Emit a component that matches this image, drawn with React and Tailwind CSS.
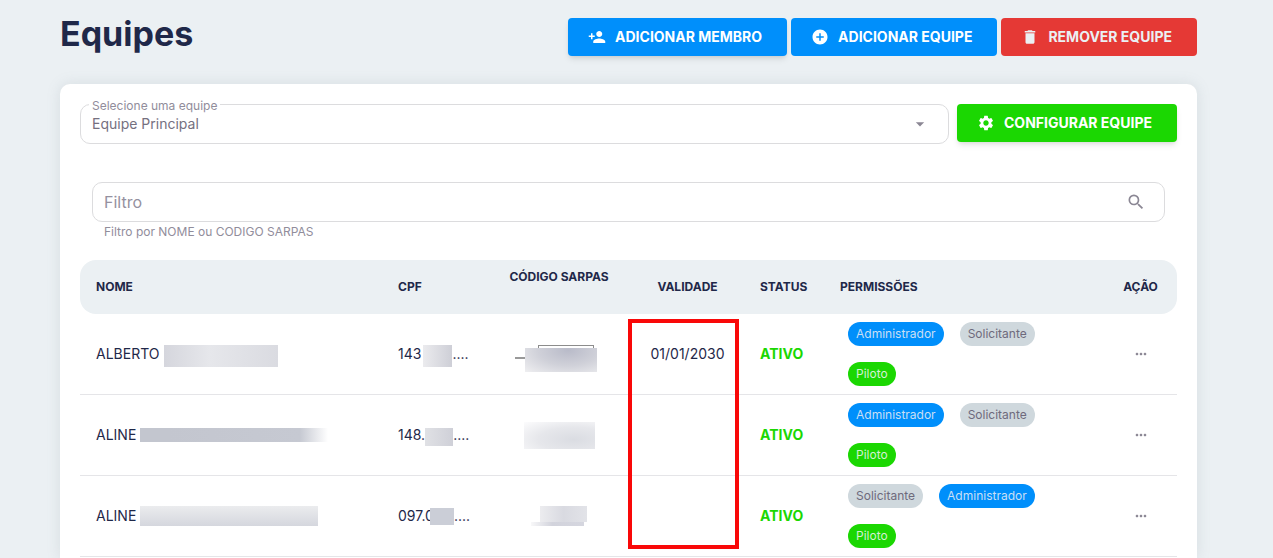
import React, {useState} from 'react'
import { MdPersonAdd, MdAddCircle, MdDelete, MdSettings, MdSearch, MdArrowDropDown, MdMoreHoriz } from 'react-icons/md'

const members = [
  {
    id: 1, name: 'ALBERTO', nameMask: 'ml-1 mt-1 w-[114px] h-[22px] bg-linear-to-r from-[#d5d6dd] via-[#e6e7eb] via-40% to-[#dadbe1]',
    cpf: '143', cpfMask: 'ml-[2px] mt-1 w-[29px] h-[22px] bg-linear-to-r from-[#ebebee] to-[#cecfd7]',
    code: 'outlined', expires: '01/01/2030', roles: ['Administrador', 'Solicitante', 'Piloto'],
  },
  {
    id: 2, name: 'ALINE', nameMask: 'ml-1 w-[188px] h-[14px] bg-linear-to-r from-[#c3c6cf] from-15% via-[#c6c9d2] via-85% to-white',
    cpf: '148.', cpfMask: 'mt-1 w-[28px] h-[18px] bg-linear-to-r from-[#e0e1e5] to-[#cfd0d8]',
    code: 'faded', expires: '', roles: ['Administrador', 'Solicitante', 'Piloto'],
  },
  {
    id: 3, name: 'ALINE', nameMask: 'ml-1 w-[178px] h-[20px] bg-linear-to-t from-[#d5d7de] to-[#ebecee]',
    cpf: '097.0', cpfMask: '-ml-1 w-[24px] h-[17px] bg-[#cbced7]',
    code: 'stacked', expires: '', roles: ['Solicitante', 'Administrador', 'Piloto'],
  },
]

const roleColors = {
  Administrador: 'bg-[#008ffb] text-[#c9dff5]',
  Solicitante: 'bg-[#cfd8dd] text-[#6e6a7c]',
  Piloto: 'bg-[#1bd702] text-[#d3f0d3]',
}

function ActionButton({icon: Icon, color, children}){
  return (
    <button type="button" className={`flex h-[38px] shrink-0 items-center gap-[9px] rounded pl-5 pr-[25px] text-sm font-bold uppercase whitespace-nowrap ${color}`}>
      <Icon size={18} aria-hidden="true" />
      {children}
    </button>
  )
}

function HiddenCode({kind}){
  if(kind==='outlined') return (
    <div className="mx-auto mt-2 flex w-[88px] items-center">
      <span className="h-[2px] w-[10px] bg-[#999]" />
      <div>
        <div className="ml-[13px] h-[3px] w-[56px] border-x border-t border-[#8c8c8c]" />
        <div className="h-6 w-[72px] bg-radial-[at_60%_10%] from-[#b9bbc9] via-[#d0d1d9] via-50% to-[#efeff1]" />
      </div>
    </div>
  )
  if(kind==='faded') return (
    <div className="mx-auto h-[27px] w-[71px] bg-radial-[at_70%_65%] from-[#dadce2] via-[#e6e7eb] via-50% to-[#fcfcfd]" />
  )
  return (
    <div className="mx-auto w-[56px] pl-[9px]">
      <div className="h-4 bg-linear-to-r from-[#ececef] via-[#d9dae1] to-[#e2e3e8]" />
      <div className="-ml-[9px] h-1 w-[53px] bg-linear-to-r from-[#f8f8f9] via-[#d2d3dc] via-40% to-[#d5d6df]" />
    </div>
  )
}

export default function App(){
  const [team, setTeam] = useState('Equipe Principal')
  const [filter, setFilter] = useState('')
  const rows = members.filter(m=>m.name.includes(filter.toUpperCase()))

  return (
    <div className="flex min-h-screen flex-col bg-[#ebf0f3] pl-[60px] pr-[76px] pt-[18px] font-['Inter',sans-serif] text-[#1f2849]">
      <header className="mb-7 flex items-start justify-between">
        <h1 className="text-[34px] leading-8 font-bold">Equipes</h1>
        <div className="flex gap-1">
          <ActionButton icon={MdPersonAdd} color="bg-[#008ffb] text-white shadow-md">Adicionar membro</ActionButton>
          <ActionButton icon={MdAddCircle} color="bg-[#008ffb] text-white">Adicionar equipe</ActionButton>
          <ActionButton icon={MdDelete} color="bg-[#e53935] text-[#ebf0f3]">Remover equipe</ActionButton>
        </div>
      </header>

      <main className="flex-1 rounded-t-[10px] bg-white px-5 pt-5 shadow-[0_0_14px_rgba(120,140,150,0.18)]">
        <div className="flex items-start gap-2">
          <div className="relative flex-1">
            <label htmlFor="team" className="absolute -top-[5px] left-[9px] bg-white px-[3px] text-xs leading-[14px] text-[#918d9b]">Selecione uma equipe</label>
            <select id="team" value={team} onChange={e=>setTeam(e.target.value)} className="h-10 w-full appearance-none rounded-[10px] border border-[#dcdcde] bg-white px-[11px] text-sm text-[#75707f]">
              <option>Equipe Principal</option>
            </select>
            <MdArrowDropDown size={20} className="pointer-events-none absolute top-[10px] right-[19px] text-[#8b8794]" aria-hidden="true" />
          </div>
          <ActionButton icon={MdSettings} color="bg-[#1bd702] text-white shadow-md">Configurar equipe</ActionButton>
        </div>

        <div className="mx-3 mt-[38px]">
          <div className="flex h-10 items-center rounded-[10px] border border-[#dcdcde] pr-[18px] pl-[11px]">
            <input value={filter} onChange={e=>setFilter(e.target.value)} placeholder="Filtro" aria-label="Filtro" aria-describedby="filter-help" className="min-w-0 flex-1 text-base outline-none placeholder:text-[#9591a0]" />
            <MdSearch size={20} className="text-[#8b8794]" aria-hidden="true" />
          </div>
          <p id="filter-help" className="mt-[2px] ml-3 text-xs text-[#918d9b]">Filtro por NOME ou CODIGO SARPAS</p>
        </div>

        <div className="relative mt-5">
          <table className="w-full table-fixed border-separate border-spacing-0 text-sm">
            <thead>
              <tr className="h-[54px] text-left text-xs [&>th]:bg-[#ebf0f3] [&>th]:font-bold">
                <th className="rounded-l-2xl px-4">NOME</th>
                <th className="w-[105px] px-4">CPF</th>
                <th className="w-[144px] pt-[9px] text-center align-top">CÓDIGO SARPAS</th>
                <th className="w-[113px] text-center">VALIDADE</th>
                <th className="w-[80px] pl-4">STATUS</th>
                <th className="w-[280px] px-4">PERMISSÕES</th>
                <th className="w-[73px] rounded-r-2xl text-center">AÇÃO</th>
              </tr>
            </thead>
            <tbody>
              {rows.map(m=>(
                <tr key={m.id} className="[&>td]:border-b [&>td]:border-[#e5e5e8]">
                  <td className="px-4">
                    <div className="flex items-center">{m.name}<span className={m.nameMask} /></div>
                  </td>
                  <td className="pl-4">
                    <div className="flex items-center">{m.cpf}<span className={`relative shrink-0 ${m.cpfMask}`} />....</div>
                  </td>
                  <td><HiddenCode kind={m.code} /></td>
                  <td className="text-center">{m.expires}</td>
                  <td className="pl-4 font-bold text-[#1bd702]">ATIVO</td>
                  <td className="px-4">
                    <ul className="flex flex-wrap">
                      {m.roles.map(r=>(
                        <li key={r} className={`m-2 h-6 rounded-full px-2 text-xs leading-6 ${roleColors[r]}`}>{r}</li>
                      ))}
                    </ul>
                  </td>
                  <td>
                    <button type="button" aria-label="Ações" className="mx-auto block text-[#8b8794]"><MdMoreHoriz size={16} /></button>
                  </td>
                </tr>
              ))}
            </tbody>
          </table>
          <div className="pointer-events-none absolute top-[59px] right-[438px] h-[230px] w-[111px] border-4 border-[#f90808]" />
        </div>
      </main>
    </div>
  )
}
